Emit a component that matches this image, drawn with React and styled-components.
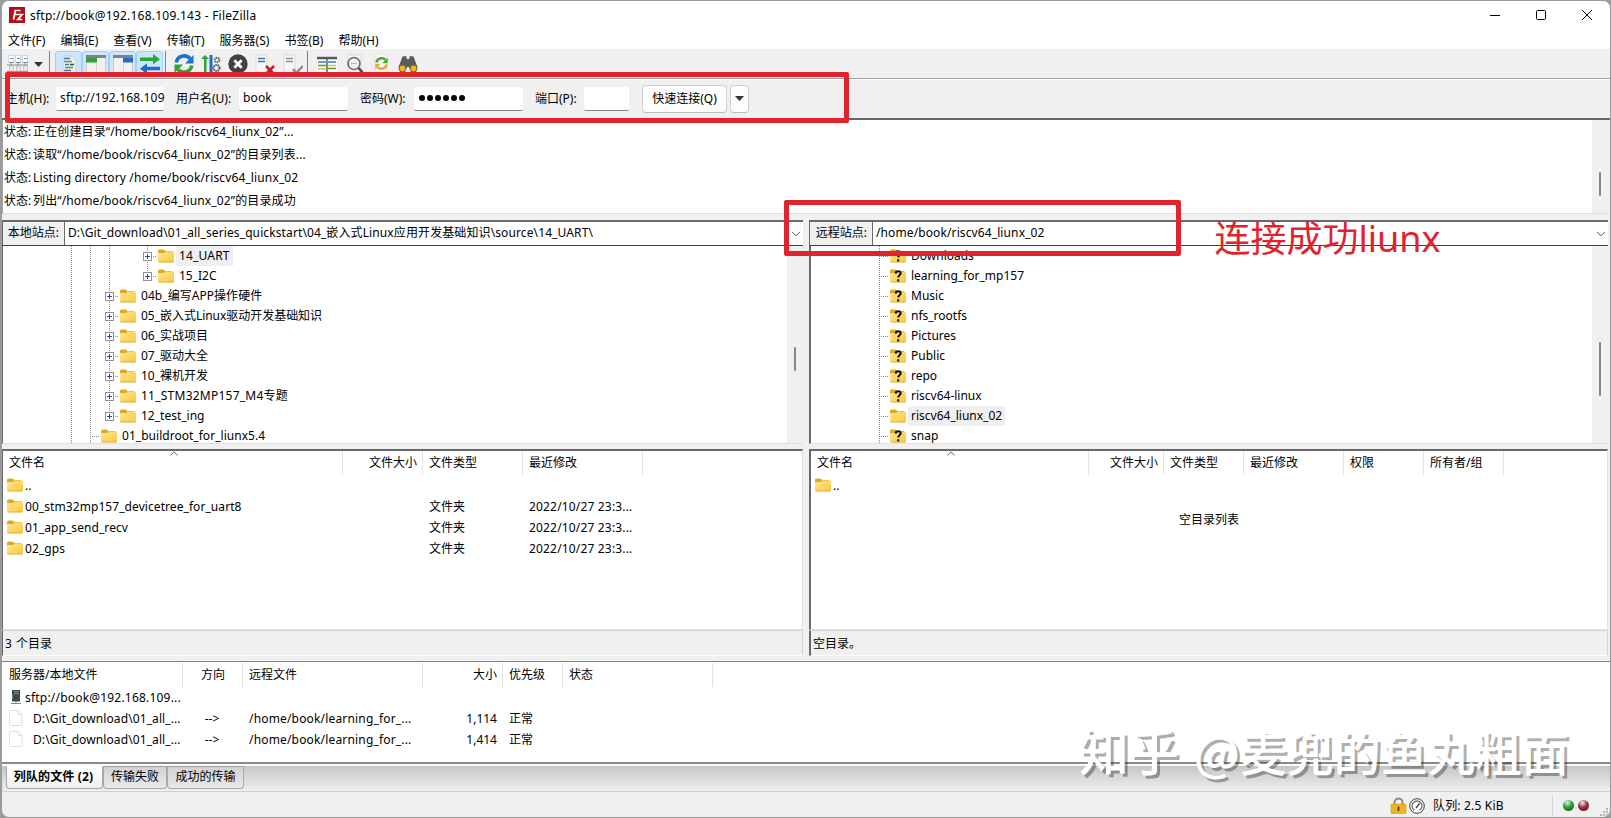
import React from 'react';
import styled, { createGlobalStyle, css } from 'styled-components';

const FACE = '#f0f0f0';
const DARK = '#696969';
const RED = '#e0232c';

const GlobalStyle = createGlobalStyle`
  * {
    box-sizing: border-box;
  }
  body {
    margin: 0;
    overflow: hidden;
    background: #8d9298;
    color: #000;
    font: 12px/20px 'Noto Sans', 'Noto Sans CJK SC', sans-serif;
  }
  svg {
    flex: none;
  }
`;

const Desktop = styled.div`
  position: relative;
  width: 1611px;
  height: 818px;
  padding: 1px 1px 1px 2px;
  overflow: hidden;
  background: #9b9b9b;
`;

const Window = styled.div`
  display: flex;
  flex-direction: column;
  height: 816px;
  overflow: hidden;
  border-radius: 7px;
  background: ${FACE};
  white-space: nowrap;
`;

/* ---------- title + menu ---------- */

const TitleBar = styled.div`
  display: flex;
  align-items: center;
  height: 28px;
  padding: 0 17px 0 7px;
  background: #fff;
`;

const Title = styled.div`
  flex: 1;
  padding: 1px 0 0 5px;
  letter-spacing: 0.24px;
`;

const WindowButtons = styled.div`
  display: flex;
  gap: 34px;
`;

const MenuBar = styled.div`
  display: flex;
  align-items: center;
  gap: 15px;
  height: 20px;
  padding: 4px 0 0 6px;
  background: #fff;
`;

/* ---------- toolbar ---------- */

const Toolbar = styled.div`
  display: flex;
  align-items: flex-start;
  height: 30px;
  padding: 2px 0 0 5px;
  border-bottom: 1px solid #a0a0a0;
`;

const ToolButton = styled.div`
  display: flex;
  align-items: center;
  justify-content: center;
  width: ${(p) => p.$w || 27}px;
  height: 26px;
  ${(p) =>
    p.$on &&
    css`
      border: 1px solid #99d1ff;
      border-radius: 3px;
      background: #cce6fb;
    `}
`;

const ToolSep = styled.div`
  width: 1px;
  height: 24px;
  margin: 0 ${(p) => p.$r}px 0 ${(p) => p.$l}px;
  background: #808080;
`;

const QuickBar = styled.div`
  display: flex;
  align-items: center;
  height: 41px;
  padding: 0 0 1px 4px;
  border-top: 1px solid #fff;
  border-bottom: 2px solid ${DARK};
`;

const FieldLabel = styled.label`
  width: ${(p) => p.$w}px;
`;

const Field = styled.div`
  width: ${(p) => p.$w}px;
  height: 24px;
  margin-right: ${(p) => p.$mr || 12}px;
  padding: 0 0 0 4px;
  border-bottom: 1px solid #868686;
  border-radius: 2px;
  background: #fff;
  line-height: 21px;
  letter-spacing: 0.15px;
`;

const Dots = styled.div`
  display: flex;
  gap: 2px;
  padding: 8px 0 0 1px;
`;

const Dot = styled.span`
  width: 6px;
  height: 6px;
  border-radius: 3px;
  background: #000;
`;

const PushButton = styled.div`
  display: flex;
  align-items: center;
  justify-content: center;
  width: ${(p) => p.$w}px;
  height: 28px;
  margin-right: 3px;
  border: 1px solid #d0d0d0;
  border-bottom-color: #bcbcbc;
  border-radius: 4px;
  background: #fdfdfd;
`;

/* ---------- message log ---------- */

const Log = styled.div`
  display: flex;
  height: 94px;
  margin-right: 2px;
  border-bottom: 1px solid #e0e0e0;
  border-left: 1px solid #a0a0a0;
  background: #fff;
`;

const LogLines = styled.div`
  flex: 1;
  padding-left: 1px;
`;

const LogLine = styled.div`
  display: flex;
  height: 23px;
  line-height: 24px;
  letter-spacing: 0.13px;
`;

const LogKind = styled.span`
  width: 29px;
  letter-spacing: 0;
`;

const ScrollTrack = styled.div`
  width: 16px;
  padding: ${(p) => p.$top}px 0 0 7px;
  background: ${FACE};
`;

const ScrollThumb = styled.div`
  width: 2px;
  height: ${(p) => p.$h}px;
  border-radius: 1px;
  background: #858585;
`;

/* ---------- panes ---------- */

const Panes = styled.div`
  display: flex;
  gap: 6px;
  padding: 6px 2px 5px 0;
`;

const Pane = styled.div`
  width: ${(p) => p.$w}px;
`;

const SiteBar = styled.div`
  display: flex;
  height: 26px;
  border-top: 2px solid ${DARK};
  border-bottom: 1px solid #404040;
  border-left: 1px solid ${DARK};
  line-height: 22px;
`;

const SiteLabel = styled.div`
  width: ${(p) => p.$w}px;
  padding-right: 5px;
  border-right: 1px solid ${DARK};
  text-align: right;
`;

const SiteCombo = styled.div`
  display: flex;
  flex: 1;
  align-items: center;
  justify-content: space-between;
  padding: 0 2px 0 3px;
  background: #fff;
`;

const SitePath = styled.span`
  height: 23px;
  letter-spacing: 0.11px;
`;

const Tree = styled.div`
  display: flex;
  height: 198px;
  border-bottom: 1px solid #e0e0e0;
  border-left: ${(p) => (p.$heavy ? 2 : 1)}px solid ${DARK};
  background: #fff;
`;

const TreeRows = styled.div`
  flex: 1;
  height: 197px;
  padding-left: ${(p) => p.$pl}px;
  overflow: hidden;
`;

const TreeRow = styled.div`
  display: flex;
  align-items: center;
  height: 20px;
`;

const vline = (h) => `repeating-linear-gradient(#8c8c8c 0 1px, transparent 1px 2px) 9px 0 / 1px ${h} no-repeat`;
const hline = `repeating-linear-gradient(90deg, #8c8c8c 0 1px, transparent 1px 2px) 9px 10px / 10px 1px no-repeat`;

const Guide = styled.div`
  display: flex;
  align-items: center;
  justify-content: center;
  width: 19px;
  height: 20px;
  background: ${(p) =>
    ({
      '|': vline('100%'),
      ' ': 'none',
      t: `${vline('100%')}, ${hline}`,
      l: `${vline('10px')}, ${hline}`,
    })[p.$kind]};
`;

const NodeIcon = styled.span`
  display: flex;
  padding-left: 1px;
`;

const NodeName = styled.span`
  height: 20px;
  margin-left: 2px;
  padding: 0 3px;
  background: ${(p) => (p.$sel ? '#efefef' : 'none')};
  letter-spacing: ${(p) => p.$ls || 0}px;
`;

const ListBox = styled.div`
  height: 181px;
  margin-top: 5px;
  border: 1px solid #e0e0e0;
  border-width: 0 1px 1px 0;
  border-top: 2px solid ${DARK};
  border-left: ${(p) => (p.$heavy ? 2 : 1)}px solid ${DARK};
  background: #fff;
`;

const HeaderRow = styled.div`
  display: flex;
  height: 24px;
  line-height: 24px;
`;

const Head = styled.div`
  position: relative;
  width: ${(p) => p.$w}px;
  padding: 0 5px 0 6px;
  border-right: 1px solid #e2e2e2;
  text-align: ${(p) => p.$align || 'left'};
`;

const SortMark = styled.svg`
  position: absolute;
  top: 0;
  left: 50%;
  margin-left: -3px;
`;

const ListRow = styled.div`
  display: flex;
  align-items: center;
  height: 21px;
`;

const Cell = styled.div`
  display: flex;
  align-items: center;
  justify-content: ${(p) => p.$align || 'flex-start'};
  gap: 2px;
  width: ${(p) => p.$w}px;
  padding: 0 ${(p) => (p.$pr === undefined ? 6 : p.$pr)}px 0 ${(p) => (p.$pl === undefined ? 6 : p.$pl)}px;
  letter-spacing: ${(p) => p.$ls || 0}px;

  svg {
    margin-bottom: 1px;
  }
`;

const EmptyNote = styled.div`
  margin-top: 14px;
  text-align: center;
`;

const PaneStatus = styled.div`
  height: 26px;
  padding-left: 2px;
  border: 1px solid #d4d4d4;
  border-bottom-color: #fff;
  border-left: ${(p) => (p.$heavy ? 2 : 1)}px solid ${DARK};
  line-height: 25px;
  word-spacing: 1px;
`;

/* ---------- queue ---------- */

const Queue = styled.div`
  height: 103px;
  border-top: 1px solid #828282;
  border-bottom: 2px solid #8a8a8a;
  background: #fff;
`;

const QueueHead = styled(HeaderRow)`
  height: 25px;
  padding: 1px 0 0 1px;
`;

const TabStrip = styled.div`
  display: flex;
  align-items: flex-start;
  height: 28px;
  padding-left: 4px;
  border-top: 2px solid #fafafa;
  border-bottom: 1px solid #d0d0d0;
  background: linear-gradient(#c6c6c6, #efefef);
`;

const Tab = styled.div`
  width: ${(p) => p.$w}px;
  height: 23px;
  padding-right: ${(p) => (p.$active ? 2 : 0)}px;
  border: 1px solid #a8a8a8;
  border-top-color: ${(p) => (p.$active ? '#fff' : '#a0a0a0')};
  border-radius: 0 0 4px 4px;
  background: ${(p) => (p.$active ? 'linear-gradient(#fff, #f0f0f0)' : 'linear-gradient(#d2d2d2, #e9e9e9)')};
  font-weight: ${(p) => (p.$active ? 700 : 400)};
  line-height: 19px;
  text-align: center;
  letter-spacing: ${(p) => (p.$active ? 0.15 : 0)}px;
`;

const StatusBar = styled.div`
  display: flex;
  flex: 1;
  align-items: center;
  justify-content: flex-end;
  padding: 2px 1px 0 0;
`;

const QueueSize = styled.div`
  width: 120px;
  margin-left: 8px;
  border-right: 1px solid #d4d4d4;
  letter-spacing: 0.18px;
`;

const Leds = styled.div`
  display: flex;
  gap: 4px;
  margin: 0 11px 0 10px;
`;

const Led = styled.span`
  width: 11px;
  height: 11px;
  border-radius: 50%;
  background: radial-gradient(circle at 40% 25%, #e8f0e8 0, ${(p) => p.$c} 45%, ${(p) => p.$d} 100%);
`;

const Grip = styled.svg`
  align-self: flex-end;
`;

/* ---------- annotations over the window ---------- */

const Marker = styled.div`
  position: absolute;
  top: ${(p) => p.$y}px;
  left: ${(p) => p.$x}px;
  width: ${(p) => p.$w}px;
  height: ${(p) => p.$h}px;
  border: 5px solid ${RED};
  border-radius: 2px;
`;

const Remark = styled.div`
  position: absolute;
  top: 214px;
  left: 1214.5px;
  color: ${RED};
  font-size: 36px;
  line-height: 50px;
  white-space: nowrap;
`;

const Watermark = styled.div`
  position: absolute;
  top: 719px;
  left: 1079px;
  display: flex;
  align-items: baseline;
  gap: 15px;
  color: #fff;
  font-family: 'Noto Sans CJK SC', sans-serif;
  font-size: 47px;
  font-weight: 500;
  line-height: 60px;
  text-shadow: 3px 3px 0 rgba(0, 0, 0, 0.32);
  white-space: nowrap;
`;

const SiteMark = styled.span`
  font-size: 50px;
`;

/* ---------- icons ---------- */

const FolderIcon = ({ unknown }) => (
  <svg width="16" height="14" viewBox="0 0 16 14">
    <defs>
      <linearGradient id="fold" x1="0" y1="0" x2="1" y2="1">
        <stop offset="0" stopColor="#ffe596" />
        <stop offset="1" stopColor="#fac93a" />
      </linearGradient>
    </defs>
    <path d="M0 2a1.5 1.5 0 0 1 1.5-1.5h4L7.5 2H14v4H0z" fill="#dfa91d" />
    <rect y="2.5" width="16" height="10.8" rx="1" fill="url(#fold)" />
    <path d="M0 2h6.2L7.6 2.8 6 4H0z" fill="#dfa91d" />
    <path d="M.6 13h14.8" stroke="#dba32c" strokeWidth=".8" />
    {unknown && (
      <path
        d="M5.6 4.6C5.8 2.9 7 2.2 8.2 2.2c1.5 0 2.5.9 2.5 2.1 0 2-2.5 2-2.5 4.2M8.2 10.3v2.2"
        fill="none"
        stroke="#111"
        strokeWidth="2"
      />
    )}
  </svg>
);

const Expander = () => (
  <svg width="9" height="9" viewBox="0 0 9 9">
    <rect x=".5" y=".5" width="8" height="8" fill="#fff" stroke="#919191" />
    <path d="M2 4.5h5M4.5 2v5" stroke="#33479b" />
  </svg>
);

const Logo = () => (
  <svg width="16" height="16" viewBox="0 0 16 16">
    <rect width="16" height="16" fill="#b11116" />
    <path d="M4.5 12.5 6.3 3.5h5.2M5.3 7.5h3.5M9 7.5h4.2L8.8 12.5h4.4" fill="none" stroke="#fff" strokeWidth="1.7" />
  </svg>
);

const Chevron = () => (
  <svg width="10" height="6" viewBox="0 0 10 6">
    <path d="M1 .8 5 4.8 9 .8" fill="none" stroke="#555" strokeWidth="1" />
  </svg>
);

const DownArrow = () => (
  <svg width="9" height="5" viewBox="0 0 9 5">
    <path d="M0 0h9L4.5 5z" fill="#333" />
  </svg>
);

const MinIcon = () => (
  <svg width="12" height="12" viewBox="0 0 12 12">
    <path d="M1 6.5h10" stroke="#000" />
  </svg>
);

const MaxIcon = () => (
  <svg width="12" height="12" viewBox="0 0 12 12">
    <rect x="1.5" y="1.5" width="9" height="9" rx="1" fill="none" stroke="#000" />
  </svg>
);

const CloseIcon = () => (
  <svg width="12" height="12" viewBox="0 0 12 12">
    <path d="m1 1 10 10M11 1 1 11" stroke="#000" />
  </svg>
);

const SitesIcon = () => (
  <svg width="22" height="20" viewBox="0 0 22 20">
    <path d="M0 11h21M0 17.5h21M4 8v12M11 8v12M18 8v12" stroke="#8f8f8f" fill="none" />
    {[1, 8, 15].map((x) => (
      <g key={x}>
        <rect x={x + 0.5} y="1.5" width="5" height="7" fill="#fdfdfd" stroke="#d3d6d8" />
        <path d={`M${x + 2} 4.5h3`} stroke="#5791bf" />
        <path d={`M${x + 1} 8.5h5`} stroke="#8a8f94" />
        <rect x={x + 1.5} y="12" width="4" height="5" fill="#e8e8e8" stroke="#b5b5b5" strokeWidth=".6" />
      </g>
    ))}
  </svg>
);

const LogIcon = () => (
  <svg width="20" height="20" viewBox="0 0 20 20">
    <path d="M4 2h9l4 4v14H4z" fill="#e9eef0" stroke="#b9c7cf" strokeWidth=".7" />
    <path d="M5 4.5h6M6 10.5h4M5 16.5h7" stroke="#3b78b8" strokeWidth="1.5" />
    <path d="M5 7.5h8M6 13.5h8" stroke="#5b9a4b" strokeWidth="1.5" />
    <path d="M11 10.5h4" stroke="#444" strokeWidth="1.5" />
  </svg>
);

const PaneIcon = ({ right }) => (
  <svg width="20" height="20" viewBox="0 0 20 20">
    <rect x=".5" y="2" width="19" height="18" fill="#f1f1f1" stroke="#c8c8c8" />
    <rect y="1" width="20" height="3" fill="#7d8388" />
    {right ? <rect x="10" y="4" width="10" height="4.5" fill="#1f70c1" /> : <rect y="4" width="11" height="4.5" fill="#2fa336" />}
    <path d="M10.5 9v11" stroke="#d2d2d2" />
  </svg>
);

const QueueIcon = () => (
  <svg width="20" height="20" viewBox="0 0 20 20">
    <path d="M0 3.5h13V0l7 5.2-7 5V7H0z" fill="#27a736" />
    <path d="M20 12.8H7V9.3l-7 5.4L7 20v-3.7h13z" fill="#1c70c3" />
  </svg>
);

const RefreshIcon = ({ size, a, b }) => (
  <svg width={size} height={size} viewBox="0 0 20 20">
    <path d="M2.2 8.5A8 8 0 0 1 16 4.5" fill="none" stroke={a} strokeWidth="3.6" />
    <path d="M19.5 1v8.5H11z" fill={a} />
    <path d="M17.8 11.5A8 8 0 0 1 4 15.5" fill="none" stroke={b} strokeWidth="3.6" />
    <path d="M.5 19v-8.5H9z" fill={b} />
  </svg>
);

const ProcessIcon = () => (
  <svg width="20" height="20" viewBox="0 0 20 20">
    <path d="M3 20V5H0l4-4 4 4H5.5v15z" fill="#2ba639" />
    <path d="M10 1v19" stroke="#1c70c3" strokeWidth="3" />
    <circle cx="16" cy="6" r="2.3" fill="none" stroke="#666" strokeWidth="2" strokeDasharray="1.5 .6" />
    <circle cx="15.5" cy="14" r="3" fill="none" stroke="#666" strokeWidth="2.2" strokeDasharray="1.5 .6" />
  </svg>
);

const CancelIcon = () => (
  <svg width="20" height="20" viewBox="0 0 20 20">
    <circle cx="10" cy="10" r="9.7" fill="#3e4246" />
    <path d="m6.3 6.3 7.4 7.4M13.7 6.3l-7.4 7.4" stroke="#fff" strokeWidth="2.8" />
  </svg>
);

const ServerIcon = ({ ok }) => (
  <svg width="20" height="20" viewBox="0 0 20 20">
    <rect x="1" y="1" width="11" height="17" fill="#f7f7f7" stroke="#d5d5d5" strokeWidth=".8" />
    <path d="M3 4.5h7M3 7.5h7" stroke={ok ? '#8d8d8d' : '#3f77ad'} strokeWidth="1.6" />
    {ok ? (
      <path d="m10 15 3 4 7-7" fill="none" stroke="#8b8b8b" strokeWidth="2.4" />
    ) : (
      <path d="m11 12 8 8M19 12l-8 8" stroke="#c71f25" strokeWidth="2.6" />
    )}
  </svg>
);

const FilterIcon = () => (
  <svg width="20" height="20" viewBox="0 0 20 20">
    <rect y="2" width="20" height="18" fill="#fafafa" />
    <path d="M0 4h20" stroke="#55595d" strokeWidth="2.6" />
    <path d="M1 8h8M11 8h8" stroke="#3b7fc0" strokeWidth="1.6" />
    <path d="M1 11.5h8M11 14.5h8" stroke="#4fa83f" strokeWidth="1.6" />
    <path d="M1 15h8M11 11.5h8" stroke="#d9c244" strokeWidth="1.6" />
    <path d="M10 4v16" stroke="#55595d" strokeWidth="1.4" />
  </svg>
);

const SearchIcon = () => (
  <svg width="18" height="20" viewBox="0 0 18 20">
    <rect x="3" y="1" width="13" height="17" fill="#fafafa" stroke="#d0d0d0" strokeWidth=".7" />
    <circle cx="9" cy="9.5" r="6" fill="#eef1f2" stroke="#6b6b6b" strokeWidth="1.6" />
    <path d="m13.5 14 4.5 5" stroke="#4a4a4a" strokeWidth="2.6" />
    <path d="M6 9.5h6" stroke="#c8ba7e" />
  </svg>
);

const SyncIcon = () => (
  <svg width="18" height="20" viewBox="0 0 18 20">
    <path d="M3 0h8l4 4v14H3z" fill="#fafafa" stroke="#dcdcdc" strokeWidth=".7" />
    <svg x="3" y="3" width="13" height="13" viewBox="0 0 20 20">
      <path d="M2.2 8.5A8 8 0 0 1 16 4.5" fill="none" stroke="#46ad35" strokeWidth="4" />
      <path d="M19.5 1v8.5H11z" fill="#46ad35" />
      <path d="M17.8 11.5A8 8 0 0 1 4 15.5" fill="none" stroke="#e9a92e" strokeWidth="4" />
      <path d="M.5 19v-8.5H9z" fill="#e9a92e" />
    </svg>
  </svg>
);

const BinocularsIcon = () => (
  <svg width="20" height="18" viewBox="0 0 20 18">
    <path d="M4.5 1.5 8 1l1 3h2l1-3 3.5.5L19.5 12 18 17h-5l-2-5H9l-2 5H2L.5 12z" fill="#5a5d60" />
    <circle cx="4.5" cy="13.5" r="3.4" fill="#f0b81a" stroke="#6f5a18" strokeWidth=".8" />
    <circle cx="15.5" cy="13.5" r="3.4" fill="#f0b81a" stroke="#6f5a18" strokeWidth=".8" />
  </svg>
);

const HostIcon = () => (
  <svg width="14" height="16" viewBox="0 0 14 16">
    <rect x="3" y="1" width="8" height="11.5" fill="#3f4a45" />
    <path d="M5 2.5h5M5 4.5h5" stroke="#7b9a84" />
    <path d="M3.5 5.5v5" stroke="#4e9a58" />
    <path d="M7 12v3M2 14.5h10" stroke="#7a8890" />
  </svg>
);

const FileIcon = () => (
  <svg width="14" height="16" viewBox="0 0 14 16">
    <path d="M.5 1.5a1 1 0 0 1 1-1H9l4 4v10a1 1 0 0 1-1 1H1.5a1 1 0 0 1-1-1zM9 .5v4h4" fill="#fff" stroke="#dedede" />
  </svg>
);

const LockIcon = () => (
  <svg width="17" height="17" viewBox="0 0 16 17">
    <path d="M4 8V5.5a4 4 0 0 1 8 0V8" fill="none" stroke="#8b8b8b" strokeWidth="2" />
    <rect x=".5" y="7" width="15" height="9.5" rx="1" fill="#f0b323" stroke="#d9991a" strokeWidth=".6" />
    <path d="M8 9.5v4.5" stroke="#5c450c" strokeWidth="1.8" />
  </svg>
);

const GaugeIcon = () => (
  <svg width="18" height="16" viewBox="0 0 18 16">
    <circle cx="10" cy="8" r="7.3" fill="#fff" stroke="#3d3d3d" />
    <path d="M7.5 12.3a5 5 0 1 1 5 0" fill="none" stroke="#777" strokeWidth="1.4" />
    <path d="m9 10 3.5-4.5" stroke="#444" strokeWidth="1.3" />
  </svg>
);

/* ---------- data ---------- */

const menus = ['文件(F)', '编辑(E)', '查看(V)', '传输(T)', '服务器(S)', '书签(B)', '帮助(H)'];

const logLines = [
  '正在创建目录“/home/book/riscv64_liunx_02”...',
  '读取“/home/book/riscv64_liunx_02”的目录列表...',
  'Listing directory /home/book/riscv64_liunx_02',
  '列出“/home/book/riscv64_liunx_02”的目录成功',
];

// guides: | through line, t branch, l last branch
const localTree = [
  { guides: '||| t', name: '14_UART', plus: true, sel: true, ls: 0.15 },
  { guides: '||| l', name: '15_I2C', plus: true },
  { guides: '||t', name: '04b_编写APP操作硬件', plus: true, ls: 0.05 },
  { guides: '||t', name: '05_嵌入式Linux驱动开发基础知识', plus: true, ls: -0.03 },
  { guides: '||t', name: '06_实战项目', plus: true },
  { guides: '||t', name: '07_驱动大全', plus: true },
  { guides: '||t', name: '10_裸机开发', plus: true },
  { guides: '||t', name: '11_STM32MP157_M4专题', plus: true, ls: 0.24 },
  { guides: '||l', name: '12_test_ing', plus: true },
  { guides: '|t', name: '01_buildroot_for_liunx5.4', ls: 0.03 },
];

const remoteTree = [
  'Downloads',
  'learning_for_mp157',
  'Music',
  'nfs_rootfs',
  'Pictures',
  'Public',
  'repo',
  'riscv64-linux',
  'riscv64_liunx_02',
  'snap',
].map((name) => ({
  guides: 't',
  name,
  sel: name === 'riscv64_liunx_02',
  unknown: name !== 'riscv64_liunx_02',
}));

const localCols = [
  { title: '文件名', w: 340, sort: true },
  { title: '文件大小', w: 80, align: 'right' },
  { title: '文件类型', w: 100 },
  { title: '最近修改', w: 120 },
];

const remoteCols = [
  { title: '文件名', w: 278, sort: true },
  { title: '文件大小', w: 75, align: 'right' },
  { title: '文件类型', w: 80 },
  { title: '最近修改', w: 100 },
  { title: '权限', w: 80 },
  { title: '所有者/组', w: 80 },
];

const queueCols = [
  { title: '服务器/本地文件', w: 180 },
  { title: '方向', w: 60, align: 'center' },
  { title: '远程文件', w: 180 },
  { title: '大小', w: 80, align: 'right' },
  { title: '优先级', w: 60 },
  { title: '状态', w: 150 },
];

const localFiles = ['00_stm32mp157_devicetree_for_uart8', '01_app_send_recv', '02_gps'];

/* ---------- pieces ---------- */

const Columns = ({ cols }) =>
  cols.map((c) => (
    <Head key={c.title} $w={c.w} $align={c.align}>
      {c.title}
      {c.sort && (
        <SortMark width="8" height="5" viewBox="0 0 8 5">
          <path d="M.5 4.5 4 .8l3.5 3.7" fill="none" stroke="#666" />
        </SortMark>
      )}
    </Head>
  ));

const TreeView = ({ nodes, heavy, pl, top, thumb }) => (
  <Tree $heavy={heavy}>
    <TreeRows $pl={pl}>
      {nodes.map((n) => (
        <TreeRow key={n.name}>
          {n.guides.split('').map((g, i) => (
            <Guide key={i} $kind={g}>
              {n.plus && i === n.guides.length - 1 && <Expander />}
            </Guide>
          ))}
          <NodeIcon><FolderIcon unknown={n.unknown} /></NodeIcon>
          <NodeName $sel={n.sel} $ls={n.ls}>{n.name}</NodeName>
        </TreeRow>
      ))}
    </TreeRows>
    <ScrollTrack $top={top}>
      <ScrollThumb $h={thumb} />
    </ScrollTrack>
  </Tree>
);

function App() {
  return (
    <Desktop>
      <GlobalStyle />
      <Window>
        <TitleBar>
          <Logo />
          <Title>sftp://book@192.168.109.143 - FileZilla</Title>
          <WindowButtons>
            <MinIcon />
            <MaxIcon />
            <CloseIcon />
          </WindowButtons>
        </TitleBar>
        <MenuBar>
          {menus.map((m) => (
            <span key={m}>{m}</span>
          ))}
        </MenuBar>
        <Toolbar>
          <ToolButton $w={22}><SitesIcon /></ToolButton>
          <ToolButton $w={18}><DownArrow /></ToolButton>
          <ToolSep $l={2} $r={5} />
          <ToolButton $on><LogIcon /></ToolButton>
          <ToolButton $on><PaneIcon /></ToolButton>
          <ToolButton $on><PaneIcon right /></ToolButton>
          <ToolButton $on><QueueIcon /></ToolButton>
          <ToolSep $l={2} $r={4} />
          <ToolButton><RefreshIcon size={20} a="#1c74c6" b="#2ba639" /></ToolButton>
          <ToolButton><ProcessIcon /></ToolButton>
          <ToolButton><CancelIcon /></ToolButton>
          <ToolButton $w={28}><ServerIcon /></ToolButton>
          <ToolButton><ServerIcon ok /></ToolButton>
          <ToolSep $l={1} $r={5} />
          <ToolButton><FilterIcon /></ToolButton>
          <ToolButton $w={28}><SearchIcon /></ToolButton>
          <ToolButton $w={26}><SyncIcon /></ToolButton>
          <ToolButton><BinocularsIcon /></ToolButton>
        </Toolbar>
        <QuickBar>
          <FieldLabel $w={50}>主机(H):</FieldLabel>
          <Field $w={108}>sftp://192.168.109</Field>
          <FieldLabel $w={63}>用户名(U):</FieldLabel>
          <Field $w={109}>book</Field>
          <FieldLabel $w={54}>密码(W):</FieldLabel>
          <Field $w={109}>
            <Dots>
              {[0, 1, 2, 3, 4, 5].map((i) => (
                <Dot key={i} />
              ))}
            </Dots>
          </Field>
          <FieldLabel $w={49}>端口(P):</FieldLabel>
          <Field $w={45} $mr={13} />
          <PushButton $w={85}>快速连接(Q)</PushButton>
          <PushButton $w={19}><DownArrow /></PushButton>
        </QuickBar>
        <Log>
          <LogLines>
            {logLines.map((l) => (
              <LogLine key={l}>
                <LogKind>状态:</LogKind>
                {l}
              </LogLine>
            ))}
          </LogLines>
          <ScrollTrack $top={52}>
            <ScrollThumb $h={24} />
          </ScrollTrack>
        </Log>
        <Panes>
          <Pane $w={801}>
            <SiteBar>
              <SiteLabel $w={62}>本地站点:</SiteLabel>
              <SiteCombo>
                <SitePath>D:\Git_download\01_all_series_quickstart\04_嵌入式Linux应用开发基础知识\source\14_UART\</SitePath>
                <Chevron />
              </SiteCombo>
            </SiteBar>
            <TreeView nodes={localTree} pl={59} top={101} thumb={24} />
            <ListBox>
              <HeaderRow><Columns cols={localCols} /></HeaderRow>
              <ListRow>
                <Cell $w={340} $pl={4}><FolderIcon />..</Cell>
              </ListRow>
              {localFiles.map((f) => (
                <ListRow key={f}>
                  <Cell $w={420} $pl={4} $ls={0.07}><FolderIcon />{f}</Cell>
                  <Cell $w={100}>文件夹</Cell>
                  <Cell $w={120} $ls={0.17}>2022/10/27 23:3...</Cell>
                </ListRow>
              ))}
            </ListBox>
            <PaneStatus>3 个目录</PaneStatus>
          </Pane>
          <Pane $w={799}>
            <SiteBar>
              <SiteLabel $w={63}>远程站点:</SiteLabel>
              <SiteCombo>
                <SitePath>/home/book/riscv64_liunx_02</SitePath>
                <Chevron />
              </SiteCombo>
            </SiteBar>
            <TreeView nodes={remoteTree} heavy pl={59} top={96} thumb={54} />
            <ListBox $heavy>
              <HeaderRow><Columns cols={remoteCols} /></HeaderRow>
              <ListRow>
                <Cell $w={278} $pl={4}><FolderIcon />..</Cell>
              </ListRow>
              <EmptyNote>空目录列表</EmptyNote>
            </ListBox>
            <PaneStatus $heavy>空目录。</PaneStatus>
          </Pane>
        </Panes>
        <Queue>
          <QueueHead><Columns cols={queueCols} /></QueueHead>
          <ListRow>
            <Cell $w={181} $pl={7} $pr={0} $ls={0.2}><HostIcon />sftp://book@192.168.109...</Cell>
          </ListRow>
          {['1,114', '1,414'].map((size) => (
            <ListRow key={size}>
              <Cell $w={31} $pl={7}><FileIcon /></Cell>
              <Cell $w={149} $pl={0} $ls={0.1}>D:\Git_download\01_all_...</Cell>
              <Cell $w={60} $align="center">--&gt;</Cell>
              <Cell $w={181} $pl={7} $ls={0.17}>/home/book/learning_for_...</Cell>
              <Cell $w={80} $align="flex-end">{size}</Cell>
              <Cell $w={60}>正常</Cell>
            </ListRow>
          ))}
        </Queue>
        <TabStrip>
          <Tab $w={97} $active>列队的文件 (2)</Tab>
          <Tab $w={64}>传输失败</Tab>
          <Tab $w={77}>成功的传输</Tab>
        </TabStrip>
        <StatusBar>
          <LockIcon />
          <GaugeIcon />
          <QueueSize>队列: 2.5 KiB</QueueSize>
          <Leds>
            <Led $c="#2f9a35" $d="#0d5413" />
            <Led $c="#a03038" $d="#5c0a10" />
          </Leds>
          <Grip width="9" height="9" viewBox="0 0 9 9">
            <path d="M6 1h2M3 4h2M6 4h2M0 7h2M3 7h2M6 7h2" stroke="#b5b5b5" strokeWidth="2" />
          </Grip>
        </StatusBar>
      </Window>
      <Marker $x={5} $y={72} $w={844} $h={51} />
      <Marker $x={784} $y={200} $w={397} $h={56} />
      <Remark>连接成功liunx</Remark>
      <Watermark>
        <SiteMark>知乎</SiteMark>
        <span>@麦兜的鱼丸粗面</span>
      </Watermark>
    </Desktop>
  );
}

export default App;
